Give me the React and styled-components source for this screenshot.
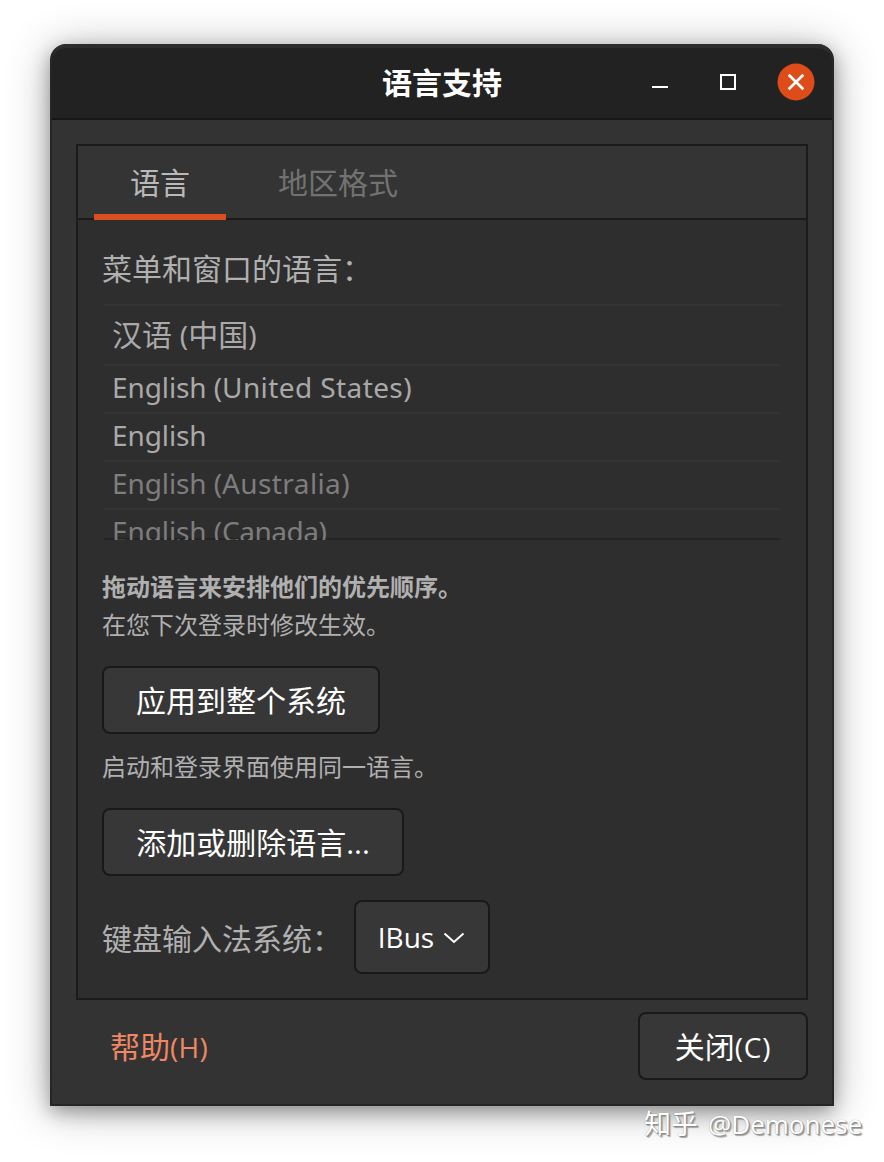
import styled, { createGlobalStyle } from 'styled-components';

const GlobalStyle = createGlobalStyle`
  * {
    box-sizing: border-box;
  }

  body {
    margin: 0;
    background: #fff;
    font-family: 'Open Sans', 'Noto Sans CJK SC', sans-serif;
  }

  button {
    font-family: inherit;
  }
`;

const Desktop = styled.div`
  width: 884px;
  height: 1162px;
  padding: 44px 50px 0;
  overflow: hidden;
`;

const Window = styled.div`
  display: flex;
  flex-direction: column;
  height: 1062px;
  border: 2px solid #262626;
  border-top: 0;
  border-radius: 16px 16px 0 0;
  background: #333;
  box-shadow: 0 6px 18px rgba(0, 0, 0, 0.3), 0 4px 44px rgba(0, 0, 0, 0.3);
`;

const TitleBar = styled.header`
  display: grid;
  grid-template-columns: 1fr auto 1fr;
  align-items: center;
  height: 76px;
  padding-right: 17px;
  padding-left: 17px;
  border-top: 4px solid #2d2d2d;
  border-bottom: 2px solid #171717;
  border-radius: 16px 16px 0 0;
  background: #222;
`;

const Title = styled.h1`
  grid-column: 2;
  height: 70px;
  margin: 0;
  font-family: 'Noto Sans CJK SC', sans-serif;
  font-size: 30px;
  font-weight: 700;
  line-height: 66px;
  color: #fff;
`;

const WindowControls = styled.div`
  display: flex;
  justify-content: flex-end;
  align-items: center;
  gap: 30px;
  height: 70px;
  padding-bottom: 2px;
`;

const ControlButton = styled.button`
  display: flex;
  padding: 0;
  border: 0;
  background: none;
`;

const Notebook = styled.main`
  display: flex;
  flex-direction: column;
  height: 856px;
  margin: 24px 24px 12px;
  border: 2px solid #1b1b1b;
  background: #2e2e2e;
`;

const TabBar = styled.nav`
  display: flex;
  gap: 16px;
  height: 74px;
  padding-left: 16px;
  border-bottom: 2px solid #1b1b1b;
  background: #343434;
`;

const Tab = styled.button`
  height: 74px;
  padding: 6px 36px 0;
  border: 0;
  border-bottom: 6px solid ${({ $active }) => ($active ? '#d84f20' : 'transparent')};
  background: none;
  font-size: 30px;
  line-height: 62px;
  color: ${({ $active }) => ($active ? '#b9b9b9' : '#727272')};
`;

const Page = styled.section`
  display: flex;
  flex-direction: column;
  align-items: flex-start;
  padding: 26px 24px 0;
`;

const Label = styled.div`
  height: 46px;
  font-size: 30px;
  line-height: 46px;
  color: #b0b0b0;
`;

const LanguageList = styled.ul`
  width: 676px;
  height: 236px;
  margin: 12px 2px 0;
  padding: 0;
  overflow: hidden;
  list-style: none;
  font-family: 'Noto Sans', 'Noto Sans CJK SC', sans-serif;
  box-shadow: inset 0 -2px #242424;
`;

const LanguageRow = styled.li`
  height: ${({ $tall }) => ($tall ? 60 : 48)}px;
  padding-left: 8px;
  border-top: 2px solid #343434;
  font-size: ${({ $tall }) => ($tall ? 30 : 28)}px;
  line-height: ${({ $tall }) => ($tall ? 58 : 43)}px;
  white-space: nowrap;
  color: ${({ $installed }) => ($installed ? '#a9a9a9' : '#7d7d7d')};
`;

const Hint = styled.p`
  height: 38px;
  margin: ${({ $top }) => $top || 0}px 0 0;
  font-family: 'Noto Sans CJK SC', sans-serif;
  font-size: 24px;
  font-weight: ${({ $bold }) => ($bold ? 700 : 400)};
  line-height: 36px;
  color: #b0b0b0;
`;

const Button = styled.button`
  display: flex;
  justify-content: center;
  align-items: center;
  width: ${({ $width }) => $width}px;
  height: ${({ $height }) => $height || 68}px;
  margin-top: ${({ $top }) => $top || 0}px;
  padding: ${({ $height }) => ($height ? 0 : 2)}px 0 0;
  border: 2px solid #191919;
  border-radius: 8px;
  background: #373737;
  font-size: 30px;
  line-height: 62px;
  color: #fff;
`;

const InputMethodRow = styled.div`
  display: flex;
  align-items: center;
  margin-top: 24px;
  height: 74px;
`;

const InputMethodLabel = styled(Label)`
  width: 252px;
  padding-top: 2px;
`;

const Chevron = styled.svg`
  margin: 1px 1px 0 9px;
`;

const Footer = styled.footer`
  display: flex;
  justify-content: space-between;
  align-items: center;
  padding: 0 24px 0 58px;
`;

const HelpLink = styled.a`
  padding-top: 2px;
  font-size: 30px;
  line-height: 66px;
  color: #f08763;
`;

const Latin = styled.span`
  font-size: ${({ $size }) => $size || 28}px;
  letter-spacing: ${({ $spacing }) => $spacing || 0}px;
`;

const Watermark = styled.div`
  position: absolute;
  top: 1105px;
  left: 644px;
  display: flex;
  gap: 10px;
  font-size: 27px;
  line-height: 38px;
  white-space: nowrap;
  color: #fff;
  text-shadow: 1px 1px 1px #888, 2px 2px 1px #a8a8a8, 0 0 1px #999;
`;

const languages = [
  { name: 'English (', region: 'United States)', installed: true, spacing: 0.4 },
  { name: 'English', region: '', installed: true, spacing: 0 },
  { name: 'English (', region: 'Australia)', installed: false, spacing: 0.4 },
  { name: 'English (', region: 'Canada)', installed: false, spacing: -0.5 },
];

const App = () => {
  return (
    <Desktop>
      <GlobalStyle />
      <Window>
        <TitleBar>
          <Title>语言支持</Title>
          <WindowControls>
            <ControlButton aria-label="最小化">
              <svg width="38" height="38" viewBox="0 0 38 38">
                <path d="M11 24H27" stroke="#fff" strokeWidth="2" />
              </svg>
            </ControlButton>
            <ControlButton aria-label="最大化">
              <svg width="38" height="38" viewBox="0 0 38 38">
                <rect x="12" y="12" width="14" height="14" fill="none" stroke="#fff" strokeWidth="2" />
              </svg>
            </ControlButton>
            <ControlButton aria-label="关闭">
              <svg width="38" height="38" viewBox="0 0 38 38">
                <circle cx="19" cy="19" r="18.5" fill="#de4c1a" />
                <path d="M11.7 11.7L26.3 26.3M26.3 11.7L11.7 26.3" stroke="#fff" strokeWidth="2.7" />
              </svg>
            </ControlButton>
          </WindowControls>
        </TitleBar>

        <Notebook>
          <TabBar>
            <Tab $active>语言</Tab>
            <Tab>地区格式</Tab>
          </TabBar>
          <Page>
            <Label>菜单和窗口的语言：</Label>
            <LanguageList>
              <LanguageRow $tall $installed>
                汉语 <Latin>(</Latin>中国<Latin>)</Latin>
              </LanguageRow>
              {languages.map(({ name, region, installed, spacing }) => (
                <LanguageRow key={name + region} $installed={installed}>
                  <Latin $spacing={-0.1}>{name}</Latin>
                  <Latin $spacing={spacing}>{region}</Latin>
                </LanguageRow>
              ))}
            </LanguageList>

            <Hint $bold $top={28}>拖动语言来安排他们的优先顺序。</Hint>
            <Hint>在您下次登录时修改生效。</Hint>
            <Button $width={278} $top={22}>应用到整个系统</Button>
            <Hint $top={14}>启动和登录界面使用同一语言。</Hint>
            <Button $width={302} $top={22}>添加或删除语言...</Button>

            <InputMethodRow>
              <InputMethodLabel>键盘输入法系统：</InputMethodLabel>
              <Button $width={136} $height={74}>
                <Latin>IBus</Latin>
                <Chevron width="22" height="14" viewBox="0 0 22 14">
                  <path d="M1.5 2.5L11 11L20.5 2.5" fill="none" stroke="#fff" strokeWidth="2" />
                </Chevron>
              </Button>
            </InputMethodRow>
          </Page>
        </Notebook>

        <Footer>
          <HelpLink>
            帮助<Latin $spacing={0.3}>(H)</Latin>
          </HelpLink>
          <Button $width={170}>
            <span>
              关闭<Latin $spacing={0.8}>(C)</Latin>
            </span>
          </Button>
        </Footer>
      </Window>
      <Watermark>
        <span>知乎</span>
        <Latin $size={26}>@Demonese</Latin>
      </Watermark>
    </Desktop>
  );
};

export default App;
